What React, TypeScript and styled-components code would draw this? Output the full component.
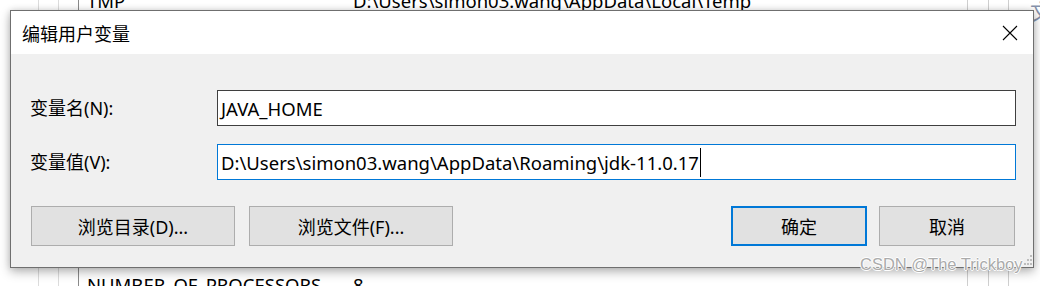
import styled, { createGlobalStyle } from "styled-components";

const GlobalStyle = createGlobalStyle`
  html, body {
    margin: 0;
    padding: 0;
    background: #ffffff;
  }
  body {
    font-family: "Noto Sans", "Noto Sans CJK SC", sans-serif;
    font-size: 18px;
    color: #000;
  }
`;

const envRows = [
  ["TMP", "D:\\Users\\simon03.wang\\AppData\\Local\\Temp"],
  ["TEMP", "D:\\Users\\simon03.wang\\AppData\\Local\\Temp"],
  ["Path", "C:\\Windows\\system32"],
  ["OS", "Windows_NT"],
  ["OneDrive", "D:\\Users\\simon03.wang\\OneDrive"],
  ["JAVA_HOME", "D:\\Users\\simon03.wang\\AppData\\Roaming\\jdk-11.0.17"],
  ["ComSpec", "C:\\Windows\\system32\\cmd.exe"],
  ["DriverData", "C:\\Windows\\System32\\Drivers\\DriverData"],
  ["HOMEPATH", "\\Users\\simon03.wang"],
  ["LOGONSERVER", "\\\\DC01"],
  ["NUMBER_OF_PROCESSORS", "8"],
];

const App = () => {
  return (
    <>
      <GlobalStyle />
      <Desktop>
        <Gutter $width={39} />
        <Gutter $width={20} />
        <Gutter $width={20} $dark />
        <ListView>
          <Rows>
            {envRows.map(([name, value]) => (
              <Row key={name}>
                <NameCell>{name}</NameCell>
                <ValueCell>{value}</ValueCell>
              </Row>
            ))}
          </Rows>
          <ScrollBar>
            <ScrollTrack />
            <ScrollTrack />
          </ScrollBar>
        </ListView>
        <SideGlyph>文</SideGlyph>

        <Dialog>
          <TitleBar>
            <Title>编辑用户变量</Title>
            <CloseButton aria-label="关闭">
              <svg width="16" height="16" viewBox="0 0 16 16">
                <path d="M1 1 L15 15 M15 1 L1 15" stroke="#000" strokeWidth="1.1" fill="none" />
              </svg>
            </CloseButton>
          </TitleBar>
          <Body>
            <Form>
              <Label>变量名(N):</Label>
              <TextBox>JAVA_HOME</TextBox>
              <Label>变量值(V):</Label>
              <TextBox $focused>
                D:\Users\simon03.wang\AppData\Roaming\jdk-11.0.17
                <Caret />
              </TextBox>
            </Form>
            <ButtonRow>
              <ButtonGroup>
                <Button $wide>浏览目录(D)...</Button>
                <Button $wide>浏览文件(F)...</Button>
              </ButtonGroup>
              <ButtonGroup $gap={12}>
                <Button $primary>确定</Button>
                <Button>取消</Button>
              </ButtonGroup>
            </ButtonRow>
          </Body>
          <SizeGrip width="8" height="10" viewBox="0 0 8 10">
            <rect x="6" y="0" width="2" height="2" fill="#bdbdbd" />
            <rect x="3" y="4" width="2" height="2" fill="#bdbdbd" />
            <rect x="6" y="4" width="2" height="2" fill="#bdbdbd" />
            <rect x="0" y="8" width="2" height="2" fill="#bdbdbd" />
            <rect x="3" y="8" width="2" height="2" fill="#bdbdbd" />
            <rect x="6" y="8" width="2" height="2" fill="#bdbdbd" />
          </SizeGrip>
        </Dialog>

        <Watermark>CSDN @The Trickboy</Watermark>
      </Desktop>
    </>
  );
};

const Desktop = styled.div`
  position: relative;
  width: 1040px;
  height: 286px;
  overflow: hidden;
  display: flex;
  background: #fff;
`;

const Gutter = styled.div<{ $width: number; $dark?: boolean }>`
  width: ${(p) => p.$width}px;
  flex: none;
  border-right: 1px solid ${(p) => (p.$dark ? "#8a8a8a" : "#dcdcdc")};
  box-sizing: border-box;
`;

const ListView = styled.div`
  width: 930px;
  flex: none;
  display: flex;
  border-right: 1px solid #cfcfcf;
  box-sizing: border-box;
`;

const Rows = styled.div`
  flex: 1;
  display: flex;
  flex-direction: column;
  margin-top: -14px;
`;

const Row = styled.div`
  height: 28.4px;
  flex: none;
  display: flex;
  align-items: center;
  font-size: 18.5px;
  white-space: nowrap;
`;

const NameCell = styled.div`
  width: 266px;
  padding-left: 8px;
`;

const ValueCell = styled.div`
  flex: 1;
`;

const ScrollBar = styled.div`
  display: flex;
  width: 41px;
`;

const ScrollTrack = styled.div`
  flex: 1;
  border-left: 1px solid #cfcfcf;
`;

const SideGlyph = styled.div`
  position: absolute;
  right: -12px;
  top: -6px;
  font-family: "Noto Sans CJK SC", sans-serif;
  font-size: 22px;
  color: #8793ad;
`;

const Dialog = styled.div`
  position: absolute;
  left: 10px;
  top: 10px;
  width: 1024px;
  height: 258px;
  box-sizing: border-box;
  border: 1px solid #6f6f6f;
  background: #f0f0f0;
  display: flex;
  flex-direction: column;
  box-shadow: 0 4px 10px rgba(0, 0, 0, 0.28), 0 0 6px rgba(0, 0, 0, 0.12);
`;

const TitleBar = styled.div`
  height: 43px;
  flex: none;
  background: #fff;
  display: flex;
  align-items: center;
  justify-content: space-between;
  padding: 0 14px 0 11px;
`;

const Title = styled.div`
  font-family: "Noto Sans CJK SC", sans-serif;
  font-size: 18px;
  color: #000;
`;

const CloseButton = styled.button`
  border: none;
  background: transparent;
  padding: 0;
  width: 18px;
  height: 18px;
  display: flex;
  align-items: center;
  justify-content: center;
`;

const Body = styled.div`
  flex: 1;
  display: flex;
  flex-direction: column;
  padding: 36px 17px 0 19px;
`;

const Form = styled.div`
  display: grid;
  grid-template-columns: 187px 1fr;
  row-gap: 18px;
  align-items: center;
`;

const Label = styled.div`
  font-family: "Noto Sans", "Noto Sans CJK SC", sans-serif;
  font-size: 18px;
  line-height: 24px;
`;

const TextBox = styled.div<{ $focused?: boolean }>`
  height: 36px;
  box-sizing: border-box;
  background: #fff;
  border: 1px solid ${(p) => (p.$focused ? "#0078d7" : "#3f3f3f")};
  padding: 0 3px;
  display: flex;
  align-items: center;
  font-size: 18.5px;
  white-space: nowrap;
`;

const Caret = styled.span`
  display: inline-block;
  width: 1px;
  height: 29px;
  background: #000;
  margin-left: 1px;
`;

const ButtonRow = styled.div`
  display: flex;
  justify-content: space-between;
  margin-top: 26px;
  padding: 0 1px 0 1px;
`;

const ButtonGroup = styled.div<{ $gap?: number }>`
  display: flex;
  gap: ${(p) => p.$gap ?? 14}px;
`;

const Button = styled.button<{ $wide?: boolean; $primary?: boolean }>`
  width: ${(p) => (p.$wide ? 204 : 136)}px;
  height: 40px;
  box-sizing: border-box;
  background: #e1e1e1;
  border: ${(p) => (p.$primary ? "2px solid #0078d7" : "1px solid #adadad")};
  font-family: "Noto Sans", "Noto Sans CJK SC", sans-serif;
  font-size: 18px;
  color: #000;
  padding: 0;
`;

const SizeGrip = styled.svg`
  position: absolute;
  right: 1px;
  bottom: 2px;
`;

const Watermark = styled.div`
  position: absolute;
  left: 860px;
  top: 255px;
  font-family: "Liberation Sans", Arial, sans-serif;
  font-size: 16.5px;
  color: #ababab;
  text-shadow: 1px 0 0 #fff, -1px 0 0 #fff, 0 1px 0 #fff, 0 -1px 0 #fff;
  white-space: nowrap;
`;

export default App;
